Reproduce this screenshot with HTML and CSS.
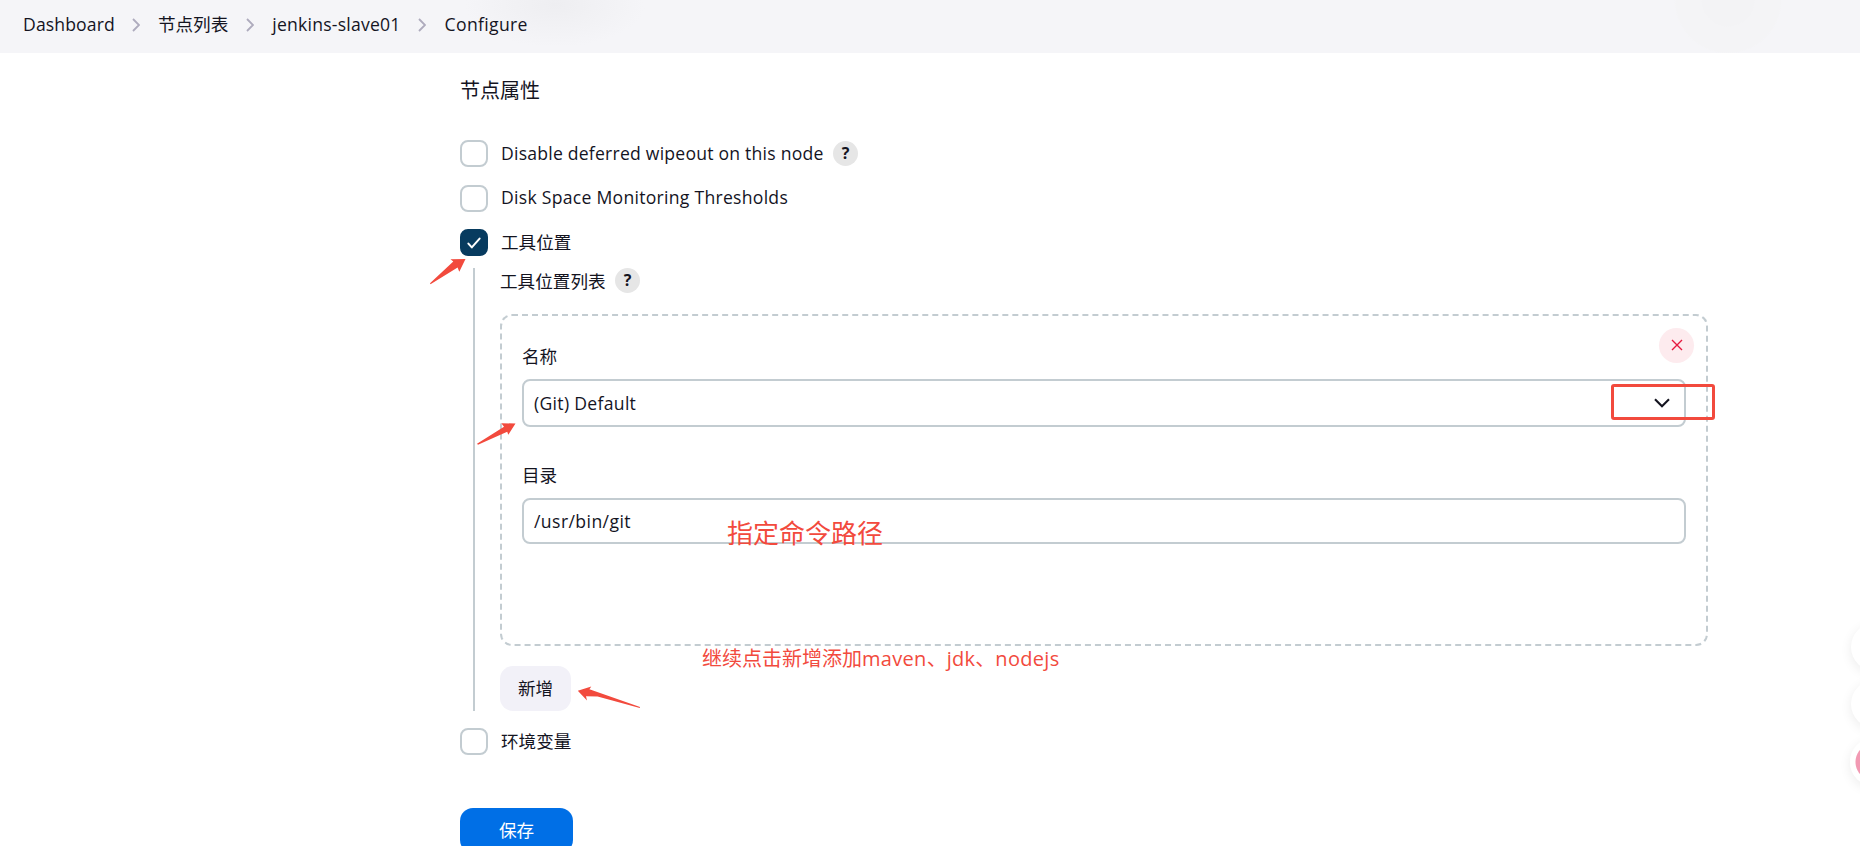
FILE: index.html
```html
<!DOCTYPE html>
<html lang="zh-CN">
<head>
<meta charset="utf-8">
<title>Configure - jenkins-slave01</title>
<link rel="stylesheet" href="styles.css">
</head>
<body>
<header class="breadcrumbs">
  <span class="crumb crumb-dashboard">Dashboard</span>
  <svg class="sep" viewBox="0 0 8 14"><path d="M1 1l6 6-6 6"/></svg>
  <span class="crumb crumb-list">节点列表</span>
  <svg class="sep" viewBox="0 0 8 14"><path d="M1 1l6 6-6 6"/></svg>
  <span class="crumb crumb-node">jenkins-slave01</span>
  <svg class="sep" viewBox="0 0 8 14"><path d="M1 1l6 6-6 6"/></svg>
  <span class="crumb crumb-page">Configure</span>
</header>
<main class="form">
  <h2 class="section-title">节点属性</h2>
  <div class="option">
    <span class="checkbox"></span>
    <span class="label label-wipeout">Disable deferred wipeout on this node</span>
    <span class="help">?</span>
  </div>
  <div class="option">
    <span class="checkbox"></span>
    <span class="label label-disk">Disk Space Monitoring Thresholds</span>
  </div>
  <div class="option">
    <span class="checkbox checked"><svg viewBox="0 0 14 12"><path d="M1.4 6.6l3.4 3.8L12.6 1.6"/></svg></span>
    <span class="label">工具位置</span>
  </div>
  <section class="nested">
    <div class="list-title"><span class="list-name">工具位置列表</span><span class="help">?</span></div>
    <div class="chunk">
      <button class="remove" aria-label="删除"><svg viewBox="0 0 12 12"><path d="M1 1l10 10M11 1L1 11"/></svg></button>
      <div class="field-label">名称</div>
      <div class="control select"><span class="value-select">(Git) Default</span><svg class="chevron" viewBox="0 0 16 10"><path d="M1 1.200L8 8.200l7-7"/></svg></div>
      <div class="field-label second">目录</div>
      <div class="control input"><span class="value-path">/usr/bin/git</span></div>
    </div>
    <button class="add">新增</button>
  </section>
  <div class="option last">
    <span class="checkbox"></span>
    <span class="label">环境变量</span>
  </div>
  <button class="save">保存</button>
</main>
<div class="annotations">
  <svg class="arrows" viewBox="0 0 1860 846">
    <path d="M430 283.200L453.300 261.500 450.500 259.300 465.500 259 459.300 271.800 457.600 267.500 430.500 284.200Z"/>
    <path d="M477 443.800L504 426.800 501.300 423.200 515.500 423.500 508.300 434.800 507.200 431.800 478 444.800Z"/>
    <path d="M577.800 690.700L591.300 686.600 589.400 689.300 640 707 639.800 708 597.600 696.600 586 696.300 587 700.500Z"/>
  </svg>
  <div class="mark-box"></div>
  <div class="note note-path">指定命令路径</div>
  <div class="note note-add">继续点击新增添加<span class="note-latin">maven</span>、<span class="note-latin">jdk</span>、<span class="note-latin">nodejs</span></div>
</div>
<div class="floating">
  <i class="bubble one"></i><i class="bubble two"></i><i class="bubble three"></i>
</div>
</body>
</html>
```
FILE: styles.css
```css
* { box-sizing: border-box; }
body {
  margin: 0;
  height: 846px;
  overflow: hidden;
  position: relative;
  background: #fff;
  color: #14141f;
  font: 17.6px/24px "Open Sans", "Noto Sans CJK SC", sans-serif;
}
button { border: 0; padding: 0; font: inherit; color: inherit; }
.breadcrumbs {
  height: 53px;
  padding: 0 0 5px 23px;
  display: flex;
  align-items: center;
  white-space: nowrap;
  background:
    radial-gradient(ellipse 90px 42px at 555px 5px, #eeeef1, rgba(238,238,241,0)),
    radial-gradient(circle at 1728px 0, #f3f3f5 0 26px, #f4f4f6 27px 52px, transparent 54px),
    #f5f5f8;
}
.crumb { margin-top: -1px; }
.crumb-dashboard { letter-spacing: .12px; }
.crumb-list { margin-left: -1px; }
.crumb-node { letter-spacing: .22px; }
.crumb-page { letter-spacing: .32px; }
.sep { width: 8px; height: 14px; margin: 1px 18.5px 0 17.5px; flex: none; fill: none; stroke: #aeabbd; stroke-width: 1.8; }
.form { padding: 25px 0 0 460px; width: 1708px; }
.section-title { margin: 0 0 36px; font-size: 20px; font-weight: 400; line-height: 26px; }
.option { display: flex; align-items: center; height: 27px; margin-bottom: 17.5px; white-space: nowrap; }
.label { margin-top: -2px; }
.label-wipeout { letter-spacing: .22px; }
.label-disk { letter-spacing: .27px; }
.checkbox { width: 28px; height: 27px; border: 2px solid #c3ccd1; border-radius: 8px; margin-right: 13px; flex: none; display: grid; place-items: center; }
.checked { background: #073b5f; border-color: #073b5f; }
.checked svg { width: 14px; height: 12px; fill: none; stroke: #fff; stroke-width: 2; stroke-linecap: round; stroke-linejoin: round; }
.help { width: 25px; height: 25px; border-radius: 50%; background: #e6e6e6; font: 700 16px/25px "Open Sans", sans-serif; text-align: center; margin-left: 9.5px; flex: none; }
.nested { margin: -6px 0 17px 13px; border-left: 2px solid #c3ccd1; padding-left: 25px; height: 443px; }
.list-title { display: flex; align-items: center; height: 25px; margin-bottom: 21px; }
.list-name { padding-top: 2px; }
.chunk { position: relative; height: 332px; border: 2px dashed #c3ccd1; border-radius: 12px; padding: 28px 20px 0; }
.remove { position: absolute; right: 12px; top: 12px; width: 35px; height: 35px; border-radius: 50%; background: #fdebee; display: grid; place-items: center; }
.remove svg { width: 12px; height: 12px; fill: none; stroke: #e6193f; stroke-width: 1.4; }
.field-label { height: 24px; margin-bottom: 11px; }
.field-label.second { margin-top: 36px; }
.control { display: flex; align-items: center; border: 2px solid #c3ccd1; border-radius: 8px; padding: 0 14px 0 10px; white-space: nowrap; }
.select { height: 48px; justify-content: space-between; }
.input { height: 46px; }
.value-select { letter-spacing: .3px; }
.value-path { letter-spacing: .42px; }
.chevron { width: 16px; height: 10px; fill: none; stroke: #14141f; stroke-width: 2.1; }
.add { display: block; margin-top: 20px; width: 71px; height: 45px; border-radius: 13px; background: #f2f1f8; }
.option.last { margin-bottom: 53px; }
.last .label { margin-top: 0; }
.save { width: 113px; height: 45px; border-radius: 13px; background: #006fe6; color: #fff; }
.annotations { position: absolute; inset: 0; pointer-events: none; color: #f24a3d; }
.arrows { position: absolute; inset: 0; width: 1860px; height: 846px; fill: #f24a3d; }
.mark-box { position: absolute; left: 1611px; top: 384px; width: 104px; height: 36px; border: 3px solid #f24a3d; border-radius: 3px; }
.note { position: absolute; white-space: nowrap; }
.note-path { left: 727px; top: 515px; font-size: 26px; line-height: 36px; }
.note-add { left: 702px; top: 645px; font-size: 20px; line-height: 28px; }
.note-latin { letter-spacing: .3px; }
.floating { position: absolute; right: 0; top: 600px; width: 40px; height: 210px; overflow: hidden; }
.bubble { position: absolute; left: 31px; width: 48px; height: 48px; border-radius: 50%; background: #fff; box-shadow: 0 3px 12px rgba(0,0,0,.08); }
.one { top: 23px; }
.two { top: 80px; }
.three { top: 138px; left: 30px; background: radial-gradient(circle, #f29ab3 0 18px, #fff 19px); }
```
